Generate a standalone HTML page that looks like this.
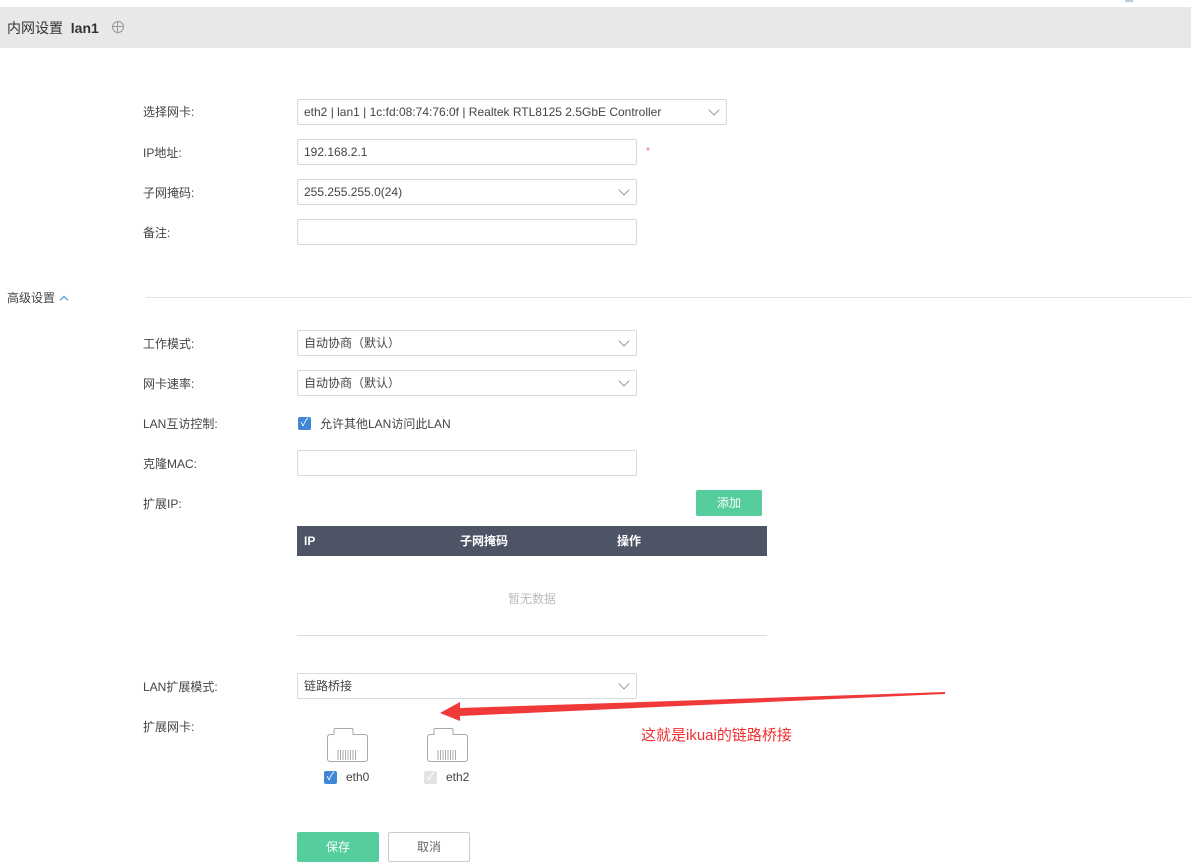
<!DOCTYPE html>
<html><head><meta charset="utf-8"><style>
body{margin:0;width:1191px;height:847px;overflow:hidden;background:#fff;font-family:"Liberation Sans","Noto Sans CJK SC",sans-serif;font-size:12px;color:#333;position:relative}
.a{position:absolute}
.lbl{position:absolute;left:143px;font-size:12px;color:#444}
.in{position:absolute;left:297px;width:340px;height:26px;border:1px solid #d9d9d9;border-radius:2px;background:#fff;line-height:24px;padding-left:6px;box-sizing:border-box;font-size:12px;color:#444}
.in.sel::after{content:"";position:absolute;right:8px;top:6px;width:7px;height:7px;border-right:1px solid #999;border-bottom:1px solid #999;transform:rotate(45deg)}
.cb{position:absolute;width:13px;height:13px;border-radius:2px;background:#3f86d6;color:#fff;font-size:11px;line-height:13px;text-align:center}
</style></head><body>
<div class="a" style="left:0;top:7px;width:1191px;height:41px;background:#e8e8e8"></div>
<div class="a" style="left:7px;top:18px;font-size:14px;color:#333">内网设置&nbsp;&nbsp;<b>lan1</b></div>
<div class="a" style="left:112px;top:21px;width:10px;height:10px;border:1px solid #999;border-radius:50%"></div>
<div class="a" style="left:117px;top:21px;width:1px;height:12px;background:#999"></div>
<div class="a" style="left:112px;top:26px;width:12px;height:1px;background:#999"></div>
<div class="a" style="left:1125px;top:0;width:8px;height:2px;background:#bcd"></div>

<div class="lbl" style="top:103px">选择网卡:</div>
<div class="in sel" style="top:99px;width:430px">eth2 | lan1 | 1c:fd:08:74:76:0f | Realtek RTL8125 2.5GbE Controller</div>
<div class="lbl" style="top:144px">IP地址:</div>
<div class="in" style="top:139px">192.168.2.1</div>
<div class="a" style="left:646px;top:146px;color:#f66;font-size:10px">*</div>
<div class="lbl" style="top:184px">子网掩码:</div>
<div class="in sel" style="top:179px">255.255.255.0(24)</div>
<div class="lbl" style="top:224px">备注:</div>
<div class="in" style="top:219px"></div>

<div class="a" style="left:7px;top:289px;color:#444">高级设置 <span style="display:inline-block;width:5px;height:5px;border-left:1px solid #3f86d6;border-top:1px solid #3f86d6;transform:rotate(45deg);margin-left:3px;position:relative;top:1px"></span></div>
<div class="a" style="left:146px;top:297px;width:1045px;height:1px;background:#e5e5e5"></div>

<div class="lbl" style="top:335px">工作模式:</div>
<div class="in sel" style="top:330px">自动协商（默认）</div>
<div class="lbl" style="top:375px">网卡速率:</div>
<div class="in sel" style="top:370px">自动协商（默认）</div>
<div class="lbl" style="top:415px">LAN互访控制:</div>
<div class="cb" style="left:298px;top:417px">✓</div>
<div class="a" style="left:320px;top:415px;color:#444">允许其他LAN访问此LAN</div>
<div class="lbl" style="top:455px">克隆MAC:</div>
<div class="in" style="top:450px"></div>
<div class="lbl" style="top:495px">扩展IP:</div>
<div class="a" style="left:696px;top:490px;width:66px;height:26px;background:#55cd9d;border-radius:2px;color:#fff;text-align:center;line-height:26px">添加</div>
<div class="a" style="left:297px;top:526px;width:470px;height:30px;background:#4d5466;color:#fff;font-weight:bold;line-height:30px">
<span class="a" style="left:7px">IP</span><span class="a" style="left:163px">子网掩码</span><span class="a" style="left:320px">操作</span></div>
<div class="a" style="left:508px;top:590px;color:#bbb">暂无数据</div>
<div class="a" style="left:297px;top:635px;width:470px;height:1px;background:#ddd"></div>

<div class="lbl" style="top:678px">LAN扩展模式:</div>
<div class="in sel" style="top:673px">链路桥接</div>
<div class="lbl" style="top:718px">扩展网卡:</div>

<svg class="a" style="left:320px;top:725px" width="160" height="40" viewBox="0 0 160 40">
<g fill="none" stroke="#aaa" stroke-width="1">
<path d="M14 9.5V4.5Q14 3.5 15 3.5H32Q33 3.5 33 4.5V9.5H44.5Q47.5 9.5 47.5 12.5V33.5Q47.5 36.5 44.5 36.5H10.5Q7.5 36.5 7.5 33.5V12.5Q7.5 9.5 10.5 9.5Z"/>
<path d="M18 25v10M20.5 25v10M23 25v10M25.5 25v10M28 25v10M30.5 25v10M33 25v10M35.5 25v10"/>
<path d="M114 9.5V4.5Q114 3.5 115 3.5H132Q133 3.5 133 4.5V9.5H144.5Q147.5 9.5 147.5 12.5V33.5Q147.5 36.5 144.5 36.5H110.5Q107.5 36.5 107.5 33.5V12.5Q107.5 9.5 110.5 9.5Z"/>
<path d="M118 25v10M120.5 25v10M123 25v10M125.5 25v10M128 25v10M130.5 25v10M133 25v10M135.5 25v10"/>
</g></svg>
<div class="cb" style="left:324px;top:771px">✓</div>
<div class="a" style="left:346px;top:770px;color:#444">eth0</div>
<div class="cb" style="left:424px;top:771px;background:#e3e3e3">✓</div>
<div class="a" style="left:446px;top:770px;color:#444">eth2</div>

<svg class="a" style="left:0;top:0" width="1191" height="847">
<polygon points="945,692 460,708 460,702 440,713 460,721 460,716 945,694" fill="#f03a3a"/>
</svg>
<div class="a" style="left:641px;top:724px;color:#f03030;font-size:15px">这就是ikuai的链路桥接</div>

<div class="a" style="left:297px;top:832px;width:82px;height:30px;background:#55cd9d;border-radius:2px;color:#fff;text-align:center;line-height:30px">保存</div>
<div class="a" style="left:388px;top:832px;width:80px;height:28px;border:1px solid #ccc;border-radius:2px;color:#666;text-align:center;line-height:28px">取消</div>
</body></html>
